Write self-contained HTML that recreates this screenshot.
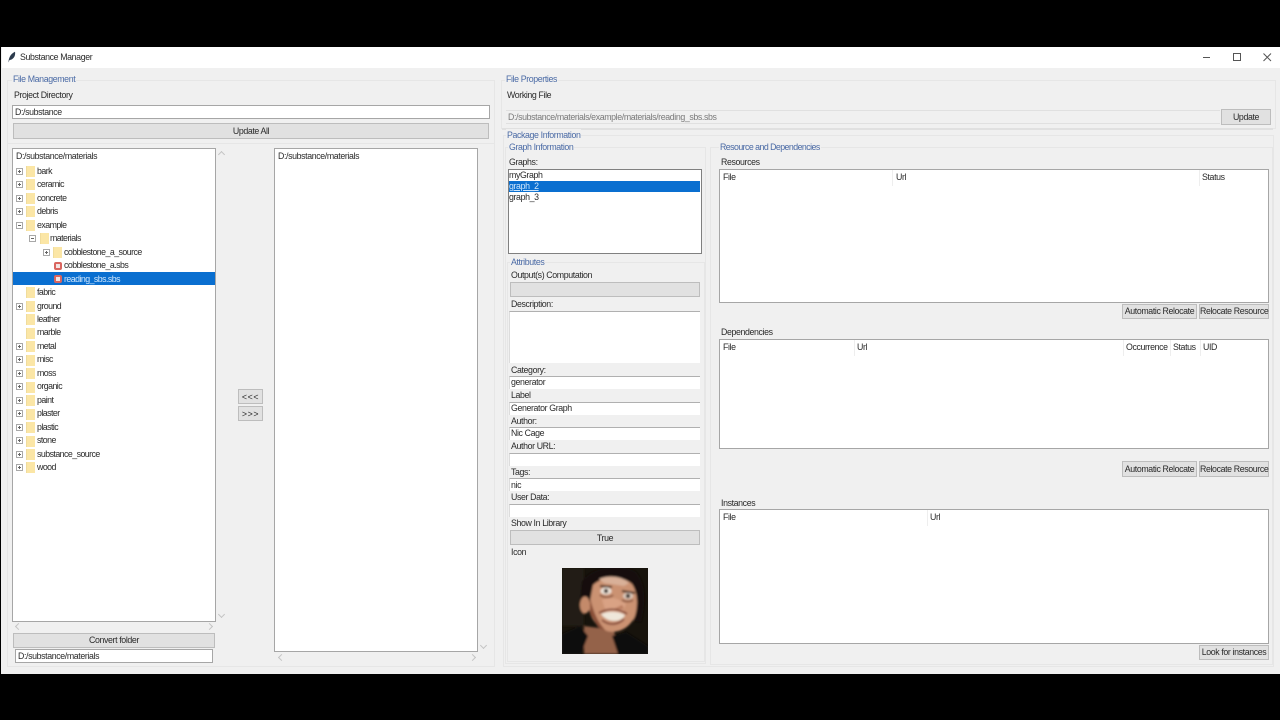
<!DOCTYPE html>
<html><head><meta charset="utf-8"><title>Substance Manager</title>
<style>
html,body{margin:0;padding:0;width:1280px;height:720px;overflow:hidden;background:#000}
*{box-sizing:border-box}
#w{position:absolute;left:1px;top:47px;width:1279px;height:627px;background:#f0f0f0}
#p{position:absolute;left:0;top:0;width:1280px;height:720px;font:8.8px/12px "Liberation Sans",sans-serif;color:#2a2a2a;letter-spacing:-.38px}
#p div{position:absolute}
.t{white-space:nowrap}
.n{letter-spacing:-.54px}
.b{color:#4a6aa5;background:#f0f0f0;padding:0 1px}
.f{border:1px solid #e6e6e6}
.i{background:#fff;border:1px solid #a6a6a6}
.e{background:#fff;border-top:1px solid #b0b0b0;border-left:1px solid #dcdcdc}
.btn{background:#e1e1e1;border:1px solid #bdbdbd;text-align:center;color:#2a2a2a;white-space:nowrap}
.pm{width:7px;height:7px;border:1px solid #a8a8a8;background:#fff}
.pm:before{content:"";position:absolute;left:1px;top:2px;width:3px;height:1px;background:#666}
.pl:after{content:"";position:absolute;left:2px;top:1px;width:1px;height:3px;background:#666}
.fo{width:9px;height:11px;margin-top:1px;background:#fbe6a6;border-left:1px solid #f0dc9c}
.h{width:1px;height:16px;background:#eee}
.s{width:8px;height:8px;background:#f3e4e2;border:2px solid #d9655f;border-radius:2px}
.ar{width:5px;height:5px;border-top:1px solid #c4c4c4;border-left:1px solid #c4c4c4}
.u{transform:rotate(45deg)}.d{transform:rotate(225deg)}.l{transform:rotate(-45deg)}.r{transform:rotate(135deg)}
</style></head><body>
<div id="w"></div>
<div id="p">
<div style="left:2px;top:47px;width:1278px;height:21px;background:#fff"></div>
<svg style="position:absolute;left:7px;top:51px" width="10" height="12" viewBox="0 0 10 12"><path d="M1.500 11.500C1.500 8 3 3 8 .8c.6 3-.5 6.500-4 8L2.500 9z" fill="#2b3a4c"/></svg>
<div class="t" style="left:20px;top:51px">Substance Manager</div>
<svg style="position:absolute;left:1200px;top:50px" width="75" height="14" viewBox="0 0 75 14" fill="none" stroke="#555"><path d="M3 7.500h7"/><rect x="33.500" y="3.500" width="7" height="7"/><path d="M63.500 3.500l7.500 7.500M71 3.500l-7.500 7.500"/></svg>

<div class="f" style="left:7px;top:80px;width:488px;height:587px"></div>
<div class="t b" style="left:12px;top:73px">File Management</div>
<div class="t" style="left:14px;top:89px">Project Directory</div>
<div class="i t" style="left:12px;top:105px;width:478px;height:14px;padding-left:2px;line-height:13px">D:/substance</div>
<div class="btn" style="left:13px;top:123px;width:476px;height:16px;line-height:15px">Update All</div>
<div style="left:8px;top:143px;width:486px;height:1px;background:#e6e6e6"></div>

<div class="i" style="left:12px;top:148px;width:204px;height:474px"></div>
<div class="t" style="left:16px;top:150px">D:/substance/materials</div>
<div style="left:13px;top:272px;width:202px;height:13px;background:#0a6fd0"></div>

<div class="pm pl" style="left:16px;top:168px"></div><div class="fo" style="left:26px;top:165px"></div><div class="t n" style="left:37px;top:165px">bark</div>
<div class="pm pl" style="left:16px;top:181px"></div><div class="fo" style="left:26px;top:178px"></div><div class="t n" style="left:37px;top:178px">ceramic</div>
<div class="pm pl" style="left:16px;top:195px"></div><div class="fo" style="left:26px;top:192px"></div><div class="t n" style="left:37px;top:192px">concrete</div>
<div class="pm pl" style="left:16px;top:208px"></div><div class="fo" style="left:26px;top:205px"></div><div class="t n" style="left:37px;top:205px">debris</div>
<div class="pm" style="left:16px;top:222px"></div><div class="fo" style="left:26px;top:219px"></div><div class="t n" style="left:37px;top:219px">example</div>
<div class="pm" style="left:29px;top:235px"></div><div class="fo" style="left:40px;top:232px"></div><div class="t n" style="left:50px;top:232px">materials</div>
<div class="pm pl" style="left:43px;top:249px"></div><div class="fo" style="left:53px;top:246px"></div><div class="t n" style="left:64px;top:246px">cobblestone_a_source</div>
<div class="s" style="left:54px;top:262px"></div><div class="t n" style="left:64px;top:259px">cobblestone_a.sbs</div>
<div class="s" style="left:54px;top:275px"></div><div class="t n" style="left:64px;top:273px;color:#cfe6fb">reading_sbs.sbs</div>
<div class="fo" style="left:26px;top:286px"></div><div class="t n" style="left:37px;top:286px">fabric</div>
<div class="pm pl" style="left:16px;top:303px"></div><div class="fo" style="left:26px;top:300px"></div><div class="t n" style="left:37px;top:300px">ground</div>
<div class="fo" style="left:26px;top:313px"></div><div class="t n" style="left:37px;top:313px">leather</div>
<div class="fo" style="left:26px;top:327px"></div><div class="t n" style="left:37px;top:326px">marble</div>
<div class="pm pl" style="left:16px;top:343px"></div><div class="fo" style="left:26px;top:340px"></div><div class="t n" style="left:37px;top:340px">metal</div>
<div class="pm pl" style="left:16px;top:356px"></div><div class="fo" style="left:26px;top:354px"></div><div class="t n" style="left:37px;top:353px">misc</div>
<div class="pm pl" style="left:16px;top:370px"></div><div class="fo" style="left:26px;top:367px"></div><div class="t n" style="left:37px;top:367px">moss</div>
<div class="pm pl" style="left:16px;top:383px"></div><div class="fo" style="left:26px;top:381px"></div><div class="t n" style="left:37px;top:380px">organic</div>
<div class="pm pl" style="left:16px;top:397px"></div><div class="fo" style="left:26px;top:394px"></div><div class="t n" style="left:37px;top:394px">paint</div>
<div class="pm pl" style="left:16px;top:410px"></div><div class="fo" style="left:26px;top:408px"></div><div class="t n" style="left:37px;top:407px">plaster</div>
<div class="pm pl" style="left:16px;top:424px"></div><div class="fo" style="left:26px;top:421px"></div><div class="t n" style="left:37px;top:421px">plastic</div>
<div class="pm pl" style="left:16px;top:437px"></div><div class="fo" style="left:26px;top:435px"></div><div class="t n" style="left:37px;top:434px">stone</div>
<div class="pm pl" style="left:16px;top:451px"></div><div class="fo" style="left:26px;top:448px"></div><div class="t n" style="left:37px;top:448px">substance_source</div>
<div class="pm pl" style="left:16px;top:464px"></div><div class="fo" style="left:26px;top:461px"></div><div class="t n" style="left:37px;top:461px">wood</div>

<div class="ar u" style="left:219px;top:152px"></div>
<div class="ar d" style="left:219px;top:612px"></div>
<div class="ar l" style="left:16px;top:624px"></div>
<div class="ar r" style="left:207px;top:624px"></div>
<div class="btn" style="left:13px;top:633px;width:202px;height:15px;line-height:13px">Convert folder</div>
<div class="i t" style="left:15px;top:649px;width:198px;height:14px;padding-left:2px;line-height:13px">D:/substance/materials</div>

<div class="btn" style="left:238px;top:389px;width:25px;height:15px;line-height:14px;letter-spacing:.6px">&lt;&lt;&lt;</div>
<div class="btn" style="left:238px;top:406px;width:25px;height:15px;line-height:14px;letter-spacing:.6px">&gt;&gt;&gt;</div>

<div class="i" style="left:274px;top:148px;width:204px;height:504px"></div>
<div class="t" style="left:278px;top:150px">D:/substance/materials</div>
<div class="ar d" style="left:481px;top:643px"></div>
<div class="ar l" style="left:279px;top:655px"></div>
<div class="ar r" style="left:470px;top:655px"></div>

<div class="f" style="left:501px;top:80px;width:775px;height:49px"></div>
<div class="t b" style="left:505px;top:73px">File Properties</div>
<div class="t" style="left:507px;top:89px">Working File</div>
<div class="t" style="left:506px;top:110px;width:714px;height:14px;border-top:1px solid #e0e0e0;border-bottom:1px solid #e0e0e0;color:#7a7a7a;padding-left:2px;line-height:13px">D:/substance/materials/example/materials/reading_sbs.sbs</div>
<div class="btn" style="left:1221px;top:109px;width:50px;height:16px;line-height:15px">Update</div>
<div style="left:502px;top:128px;width:771px;height:2px;background:#e0e0e0"></div>

<div class="f" style="left:503px;top:135px;width:771px;height:532px"></div>
<div class="t b" style="left:506px;top:129px">Package Information</div>
<div class="f" style="left:505px;top:147px;width:201px;height:517px"></div>
<div class="t b" style="left:508px;top:141px">Graph Information</div>
<div class="t" style="left:509px;top:156px">Graphs:</div>
<div class="i" style="left:508px;top:169px;width:194px;height:85px;border-color:#808080"></div>
<div class="t" style="left:509px;top:169px">myGraph</div>
<div style="left:509px;top:181px;width:191px;height:11px;background:#0a6fd0"></div>
<div class="t" style="left:509px;top:180px;color:#cfe6fb;text-decoration:underline">graph_2</div>
<div class="t" style="left:509px;top:191px">graph_3</div>

<div class="f" style="left:507px;top:262px;width:198px;height:400px"></div>
<div class="t b" style="left:510px;top:256px">Attributes</div>
<div class="t" style="left:511px;top:269px">Output(s) Computation</div>
<div class="btn" style="left:510px;top:282px;width:190px;height:15px"></div>
<div class="t" style="left:511px;top:298px">Description:</div>
<div class="e" style="left:509px;top:311px;width:191px;height:52px"></div>
<div class="t" style="left:511px;top:364px">Category:</div>
<div class="e t" style="left:509px;top:376px;width:191px;height:13px;padding-left:1px;line-height:11px">generator</div>
<div class="t" style="left:511px;top:389px">Label</div>
<div class="e t" style="left:509px;top:402px;width:191px;height:13px;padding-left:1px;line-height:11px">Generator Graph</div>
<div class="t" style="left:511px;top:415px">Author:</div>
<div class="e t" style="left:509px;top:427px;width:191px;height:13px;padding-left:1px;line-height:11px">Nic Cage</div>
<div class="t" style="left:511px;top:440px">Author URL:</div>
<div class="e" style="left:509px;top:453px;width:191px;height:13px"></div>
<div class="t" style="left:511px;top:466px">Tags:</div>
<div class="e t" style="left:509px;top:478px;width:191px;height:13px;padding-left:1px;line-height:12px">nic</div>
<div class="t" style="left:511px;top:491px">User Data:</div>
<div class="e" style="left:509px;top:504px;width:191px;height:13px"></div>
<div class="t" style="left:511px;top:517px">Show In Library</div>
<div class="btn" style="left:510px;top:530px;width:190px;height:15px;line-height:14px">True</div>
<div class="t" style="left:511px;top:546px">Icon</div>

<svg style="position:absolute;left:562px;top:568px" width="86" height="86" viewBox="0 0 86 86">
<defs><filter id="bl" x="-10%" y="-10%" width="120%" height="120%"><feGaussianBlur stdDeviation="1.100"/></filter>
<clipPath id="cl"><rect width="86" height="86"/></clipPath></defs>
<rect width="86" height="86" fill="#17130c"/>
<g clip-path="url(#cl)"><g filter="url(#bl)">
<rect width="22" height="58" fill="#211c12"/>
<path d="M20 14C30-3 62-4 74 4 84 16 84 34 79 54L30 46 18 34z" fill="#120c08"/>
<path d="M22 58L52 62 56 86H22z" fill="#94624a"/>
<path d="M0 66L18 58 26 68 19 86H0z" fill="#100c09"/>
<path d="M50 68L64 64 86 78V86H56z" fill="#0c0a08"/>
<path d="M31 17C40 8 60 7 70 16 76 25 76 38 73 48 68 60 56 66 45 63 35 59 27 50 27 38z" fill="#cb9272"/>
<path d="M37 11C46 7 60 8 67 15L62 18 42 15z" fill="#d9b098"/>
<path d="M40 32C48 28 56 30 64 36L60 46 44 44z" fill="#d9a284"/>
<ellipse cx="23" cy="37" rx="5" ry="8.500" fill="#c48a6a"/>
<path d="M28 30C32 46 36 54 44 63L36 59 28 46z" fill="#8a5039"/>
<path d="M38 18L50 19M60 23L73 25" stroke="#3e2417" stroke-width="2" fill="none"/>
<path d="M38 27C42 30 48 30 51 27M60 32C63 34 68 34 71 32" stroke="#7a4732" stroke-width="1.500" fill="none"/>
<ellipse cx="44" cy="23" rx="5.500" ry="3.600" fill="#efe6dc"/><circle cx="44" cy="23" r="2.200" fill="#2a1a12"/>
<ellipse cx="66" cy="28" rx="5" ry="3.200" fill="#ddccbf"/><circle cx="66" cy="28" r="2.200" fill="#2a1a12"/>
<path d="M54 24L60 37 52 41 62 41z" fill="#b97c5e"/>
<path d="M39 46C46 43 56 43 63 47 60 54 46 56 39 46z" fill="#efe7da"/>
<path d="M37 45C46 40 56 40 65 46" stroke="#7d4132" stroke-width="1.800" fill="none"/>
<path d="M40 52C47 58 56 57 62 51" stroke="#7d4132" stroke-width="1.800" fill="none"/>
</g></g>
</svg>

<div class="f" style="left:710px;top:147px;width:563px;height:518px"></div>
<div class="t b" style="left:719px;top:141px;letter-spacing:-.55px">Resource and Dependencies</div>
<div class="t" style="left:721px;top:156px">Resources</div>
<div class="i" style="left:719px;top:169px;width:550px;height:134px"></div>
<div class="t" style="left:723px;top:171px">File</div><div class="h" style="left:892px;top:170px"></div>
<div class="t" style="left:896px;top:171px">Url</div><div class="h" style="left:1199px;top:170px"></div>
<div class="t" style="left:1202px;top:171px">Status</div>
<div class="btn" style="left:1122px;top:304px;width:75px;height:15px;line-height:13px">Automatic Relocate</div>
<div class="btn" style="left:1199px;top:304px;width:70px;height:15px;line-height:13px">Relocate Resource</div>

<div class="t" style="left:721px;top:326px">Dependencies</div>
<div class="i" style="left:719px;top:339px;width:550px;height:110px"></div>
<div class="t" style="left:723px;top:341px">File</div><div class="h" style="left:854px;top:340px"></div>
<div class="t" style="left:857px;top:341px">Url</div><div class="h" style="left:1123px;top:340px"></div>
<div class="t" style="left:1126px;top:341px">Occurrence</div><div class="h" style="left:1170px;top:340px"></div>
<div class="t" style="left:1173px;top:341px">Status</div><div class="h" style="left:1200px;top:340px"></div>
<div class="t" style="left:1203px;top:341px">UID</div>
<div class="btn" style="left:1122px;top:461px;width:75px;height:16px;line-height:15px">Automatic Relocate</div>
<div class="btn" style="left:1199px;top:461px;width:70px;height:16px;line-height:15px">Relocate Resource</div>

<div class="t" style="left:721px;top:497px">Instances</div>
<div class="i" style="left:719px;top:509px;width:550px;height:135px"></div>
<div class="t" style="left:723px;top:511px">File</div><div class="h" style="left:927px;top:510px"></div>
<div class="t" style="left:930px;top:511px">Url</div>
<div class="btn" style="left:1199px;top:645px;width:70px;height:15px;line-height:13px">Look for instances</div>
</div>
</body></html>
